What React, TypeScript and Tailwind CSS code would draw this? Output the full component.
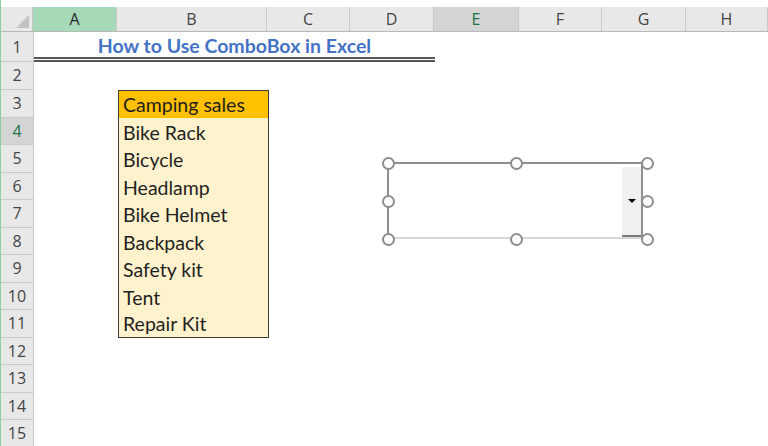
import React from "react";

const cols = [
  { label: "A", w: "w-[84px]" },
  { label: "B", w: "w-[150px]" },
  { label: "C", w: "w-[83px]" },
  { label: "D", w: "w-[84px]" },
  { label: "E", w: "w-[85px]" },
  { label: "F", w: "w-[83px]" },
  { label: "G", w: "w-[84px]" },
  { label: "H", w: "w-[82px]" },
];

const items = [
  "Bike Rack",
  "Bicycle",
  "Headlamp",
  "Bike Helmet",
  "Backpack",
  "Safety kit",
  "Tent",
  "Repair Kit",
];

const uiFont = { fontFamily: '"Open Sans", "Noto Sans", sans-serif' };
const cellFont = { fontFamily: 'Lato, "Liberation Sans", sans-serif' };

function Handle({ x, y }: { x: number; y: number }) {
  // sizing handle, centred on (x, y) of the floating control
  return (
    <div
      className="absolute h-[13px] w-[13px] rounded-full border-2 border-[#8e8e8e] bg-white"
      style={{ left: x - 6.5, top: y - 6.5 }}
    />
  );
}

function RowHeader({ n, h }: { n: number; h: string }) {
  const active = n === 4;
  return (
    <div
      className={`flex ${h} w-[33px] items-center justify-center border-b border-r border-[#c9c9c9] text-[16px] ${
        active ? "bg-[#d4d4d4] text-[#217346]" : "bg-[#e8e8e8] text-[#444]"
      }`}
      style={uiFont}
    >
      {n}
    </div>
  );
}

export default function App() {
  return (
    <div className="relative h-[446px] w-[768px] overflow-hidden border-l border-[#8fcca4] bg-white">
      <div className="h-[7px] bg-white" />

      {/* column headers */}
      <div className="flex h-[25px] border-b border-[#b9b9b9]" style={uiFont}>
        <div className="relative w-[32px] border-r border-[#c9c9c9] bg-[#e8e8e8]">
          <div className="absolute bottom-[3px] right-[3px] h-0 w-0 border-b-[13px] border-l-[13px] border-b-[#c2c2c2] border-l-transparent" />
        </div>
        {cols.map((c) => (
          <div
            key={c.label}
            className={`flex ${c.w} items-center justify-center border-r border-[#c9c9c9] text-[16px] ${
              c.label === "A"
                ? "bg-[#a6d9b8] text-[#2b2b2b]"
                : c.label === "E"
                ? "bg-[#d4d4d4] text-[#217346]"
                : "bg-[#e8e8e8] text-[#444]"
            }`}
          >
            {c.label}
          </div>
        ))}
      </div>

      {/* row 1 with title */}
      <div className="flex">
        <RowHeader n={1} h="h-[30px]" />
        <div className="flex h-[30px] w-[401px] items-end justify-center border-b-[5px] border-double border-[#555] pb-[2px]">
          <span className="text-[19.5px] font-bold leading-none text-[#4472c4]" style={cellFont}>
            How to Use ComboBox in Excel
          </span>
        </div>
      </div>

      {/* row 2 */}
      <div className="flex">
        <RowHeader n={2} h="h-[27.5px]" />
      </div>

      {/* row 3 header of list */}
      <div className="flex">
        <RowHeader n={3} h="h-[28px]" />
        <div className="w-[84px]" />
        <div
          className="flex h-[28px] w-[151px] items-end border-x border-t border-[#3a3a3a] bg-[#ffc000] pb-[3px] pl-[4px] text-[19.5px] leading-none text-[#1f1f1f]"
          style={cellFont}
        >
          Camping sales
        </div>
      </div>

      {/* rows 4 - 11 */}
      {items.map((item, i) => (
        <div className="flex" key={item}>
          <RowHeader n={i + 4} h="h-[27.5px]" />
          <div className="w-[84px]" />
          <div
            className={`flex h-[27.5px] w-[151px] items-end border-x border-[#3a3a3a] bg-[#fff2cc] pb-[3px] pl-[4px] text-[19.5px] leading-none text-[#1f1f1f] ${
              i === items.length - 1 ? "border-b" : ""
            }`}
            style={cellFont}
          >
            {item}
          </div>
        </div>
      ))}

      {/* rows 12 - 15 */}
      {[12, 13, 14, 15].map((n) => (
        <div className="flex" key={n}>
          <RowHeader n={n} h="h-[27.5px]" />
        </div>
      ))}

      {/* floating combo box control */}
      <div className="absolute left-[386px] top-[162px] h-[77px] w-[256px] border-x-2 border-t-2 border-b-2 border-[#8e8e8e] border-b-[#d6d6d6] bg-white">
        <div className="absolute bottom-0 right-0 top-[3px] flex w-[19px] items-center justify-center border-b-2 border-[#7a7a7a] bg-[#f0f0f0]">
          <div className="h-0 w-0 border-x-[4px] border-t-[4px] border-x-transparent border-t-black" />
        </div>
      </div>
      <Handle x={387} y={163} />
      <Handle x={515} y={163} />
      <Handle x={646} y={163} />
      <Handle x={387} y={201} />
      <Handle x={646} y={201} />
      <Handle x={387} y={239} />
      <Handle x={515} y={239} />
      <Handle x={646} y={239} />
    </div>
  );
}
